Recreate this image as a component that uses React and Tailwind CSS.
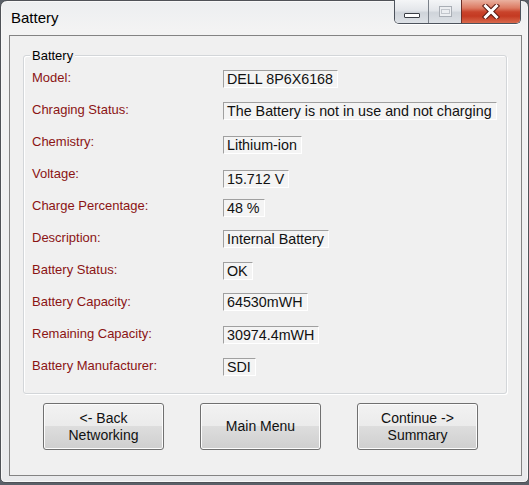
export default function App() {
  const rows = [
    ["Model:", "DELL 8P6X6168", "mt-[1px]"],
    ["Chraging Status:", "The Battery is not in use and not charging", "mt-[1px]"],
    ["Chemistry:", "Lithium-ion", "mt-[3px]"],
    ["Voltage:", "15.712 V", "mt-[5px]"],
    ["Charge Percentage:", "48 %", "mt-[2px]"],
    ["Description:", "Internal Battery", "mt-[1px]"],
    ["Battery Status:", "OK", "mt-[1px]"],
    ["Battery Capacity:", "64530mWH", "mt-[0px]"],
    ["Remaining Capacity:", "30974.4mWH", "mt-[1px]"],
    ["Battery Manufacturer:", "SDI", "mt-[1px]"],
  ];
  const font = { fontFamily: '"Liberation Sans", Arial, sans-serif' };
  const btn =
    "w-[121px] h-[47px] rounded-[3px] border border-[#707070] bg-[linear-gradient(to_bottom,#f2f2f2_0%,#ebebeb_48%,#dddddd_50%,#cfcfcf_100%)] shadow-[inset_0_0_0_1px_#fcfcfc] flex flex-col items-center justify-center text-[14px] leading-[17px] text-[#111111]";
  return (
    <div className="w-[529px] h-[485px] bg-[#5a6068]" style={font}>
      <div className="relative w-[529px] h-[483px] rounded-t-[7px] rounded-b-[5px] border border-[#4f5257] bg-[linear-gradient(to_bottom,#eceef0_0%,#f3f3f3_6%,#e9eaec_100%)] shadow-[inset_0_0_0_1px_#f8f8f8]">
        {/* title bar */}
        <div className="h-[34px] flex items-start pl-[10px] pt-[8px]">
          <span className="text-[15px] leading-[18px] text-black">Battery</span>
        </div>
        {/* caption buttons */}
        <div className="absolute top-[-1px] left-[393px] flex h-[24px] w-[127px] rounded-b-[5px] border border-t-0 border-[#4d535c] overflow-hidden shadow-[0_1px_0_#ffffff]">
          <div className="w-[34px] h-full flex items-end justify-center pb-[5px] bg-[linear-gradient(to_bottom,#f4f5f7_0%,#e3e6ea_45%,#cfd4da_55%,#dde1e6_100%)] border-r border-[#7b818a]">
            <div className="w-[16px] h-[5px] rounded-[1px] bg-white border border-[#3a3e45]"></div>
          </div>
          <div className="w-[33px] h-full flex items-center justify-center bg-[linear-gradient(to_bottom,#f4f5f7_0%,#e3e6ea_45%,#cfd4da_55%,#dde1e6_100%)] border-r border-[#6b3028]">
            <div className="w-[13px] h-[11px] border border-[#a9aeb5] bg-[#eceef1] flex items-center justify-center">
              <div className="w-[9px] h-[5px] border border-[#c2c6cc]"></div>
            </div>
          </div>
          <div className="flex-1 h-full flex items-center justify-center bg-[linear-gradient(to_bottom,#eab1a0_0%,#dc7a62_35%,#c9432b_52%,#c43a22_70%,#d9694c_100%)]">
            <svg width="20" height="15" viewBox="0 0 20 15">
              <path d="M4.5 2 L15.5 13 M15.5 2 L4.5 13" stroke="#5a1a12" strokeWidth="5" strokeLinecap="square" />
              <path d="M4.5 2 L15.5 13 M15.5 2 L4.5 13" stroke="#ffffff" strokeWidth="3" strokeLinecap="square" />
            </svg>
          </div>
        </div>
        {/* client area */}
        <div className="ml-[8px] w-[513px] h-[441px] border border-[#838383] bg-[#f0f0f0] flex flex-col">
          <div className="relative ml-[13px] mt-[19px] w-[484px] h-[339px] rounded-[3px] border border-[#d3d6d9] shadow-[inset_1px_1px_0_#ffffff,1px_1px_0_#ffffff] pt-[13px] pl-[8px] flex flex-col gap-[14px]">
            <span className="absolute left-[6px] top-[-8px] px-[2px] bg-[#f0f0f0] text-[13px] leading-[16px] text-black">
              Battery
            </span>
            {rows.map(([label, value, off]) => (
              <div key={label} className="flex items-start h-[18px]">
                <div className="w-[191px] text-[13px] leading-[18px] text-[#8b1414]">{label}</div>
                <div
                  className={`${off} border-t border-l border-t-[#a0a0a0] border-l-[#a0a0a0] border-r border-b border-r-[#ffffff] border-b-[#ffffff] bg-[#f4f4f4] pl-[3px] pr-[4px] text-[14.3px] leading-[16px] text-[#111111] whitespace-nowrap`}
                >
                  {value}
                </div>
              </div>
            ))}
          </div>
          <div className="ml-[33px] mt-[9px] flex gap-[36px]">
            <div className={btn}>
              <span>&lt;- Back</span>
              <span>Networking</span>
            </div>
            <div className={btn}>
              <span>Main Menu</span>
            </div>
            <div className={btn}>
              <span>Continue -&gt;</span>
              <span>Summary</span>
            </div>
          </div>
        </div>
      </div>
    </div>
  );
}
